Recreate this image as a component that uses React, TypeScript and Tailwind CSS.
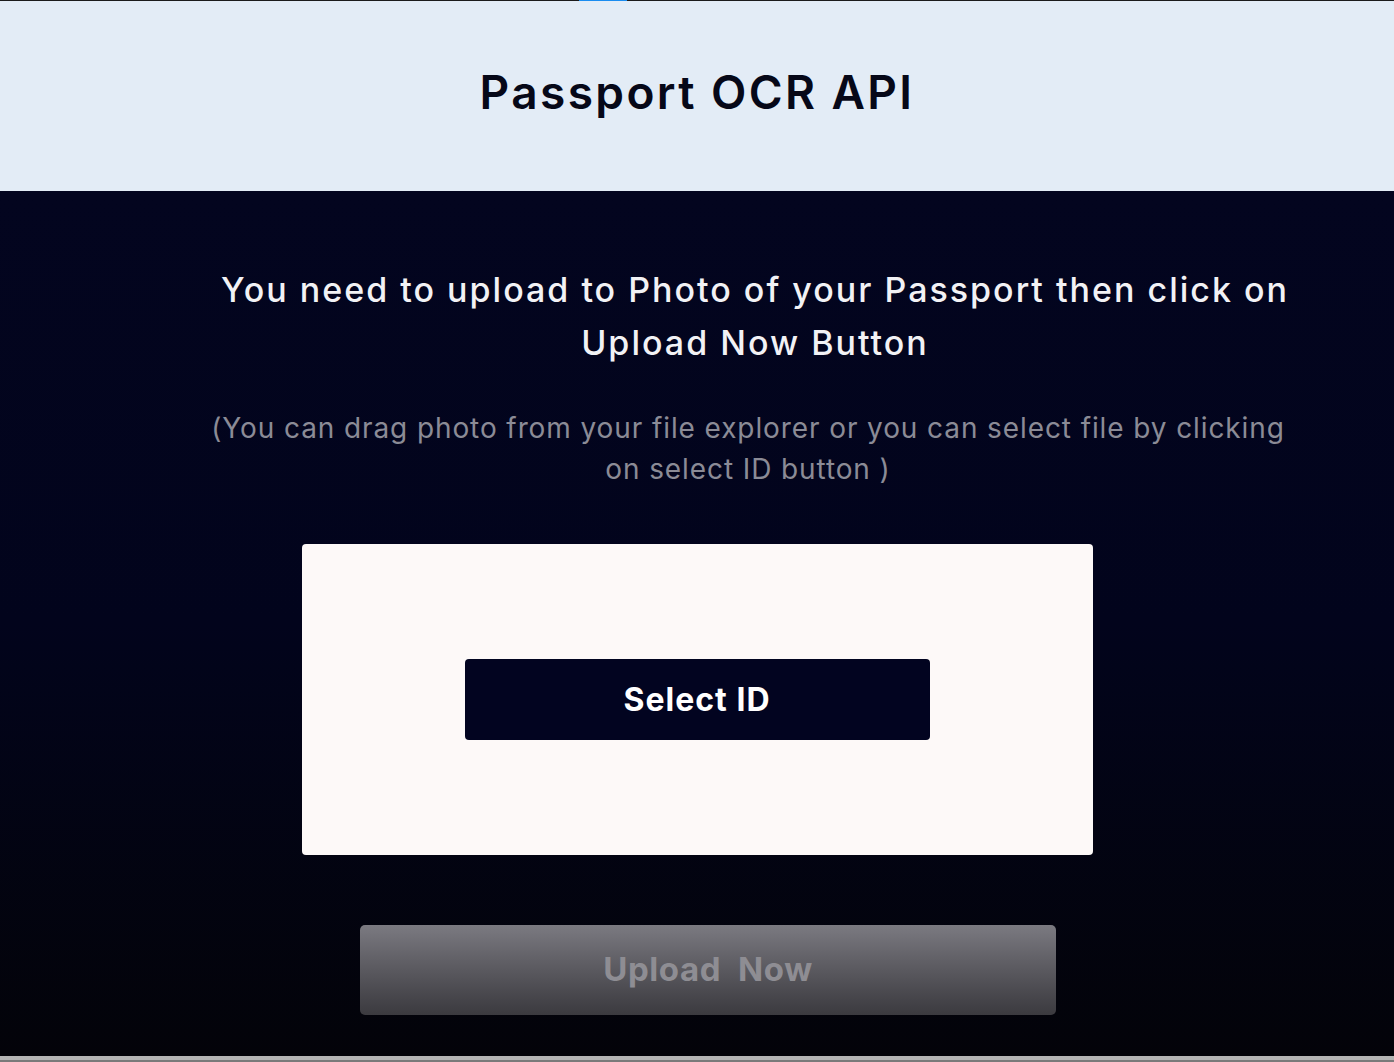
import React from 'react';

const font = { fontFamily: 'Inter, "Noto Sans", sans-serif' };

export default function App() {
  return (
    <div className="relative h-[1062px] w-full overflow-hidden bg-black" style={font}>
      {/* top strip */}
      <div className="h-px w-full bg-[#1b1b1b]">
        <div className="ml-[579px] h-px w-[48px] bg-[#1a8cf0]" />
      </div>

      {/* header */}
      <header className="flex h-[190px] items-center justify-center bg-[#e3ecf6] pb-[8px] shadow-[0_2px_2px_rgba(0,0,0,0.35)]">
        <h1 className="text-[46px] font-semibold tracking-[2.4px] text-[#060818]">Passport OCR API</h1>
      </header>

      {/* body */}
      <main className="flex h-[865px] flex-col items-center bg-gradient-to-b from-[#03051f] via-[#02041c] to-[#030309]">
        <p className="mt-[72px] pl-[116px] text-center text-[34px] font-medium leading-[53px] tracking-[2px] text-[#f2f2f5]">
          You need to upload to Photo of your Passport then click on
          <br />
          Upload Now Button
        </p>
        <p className="mt-[39px] pl-[102px] text-center text-[28px] leading-[41px] tracking-[0.9px] text-[#8b8b96]">
          (You can drag photo from your file explorer or you can select file by clicking
          <br />
          on select ID button )
        </p>

        <div className="mt-[54px] flex h-[311px] w-[791px] flex-col items-center rounded-[4px] bg-[#fdf9f8] pt-[115px]">
          <button className="flex h-[81px] w-[465px] items-center justify-center rounded-[4px] bg-[#020420] text-[32px] font-bold tracking-[1px] text-white">
            Select ID
          </button>
        </div>

        <button className="ml-[22px] mt-[70px] flex h-[90px] w-[696px] items-center justify-center rounded-[5px] bg-gradient-to-b from-[#7b7a81] to-[#3b3a3f] text-[33px] font-bold tracking-[0.6px] text-[#8e8d93]">
          Upload&nbsp; Now
        </button>
      </main>

      {/* bottom strip */}
      <div className="h-[4px] w-full bg-[#b4b4b4]" />
      <div className="h-[2px] w-full bg-[#7a7a7a]" />
    </div>
  );
}
